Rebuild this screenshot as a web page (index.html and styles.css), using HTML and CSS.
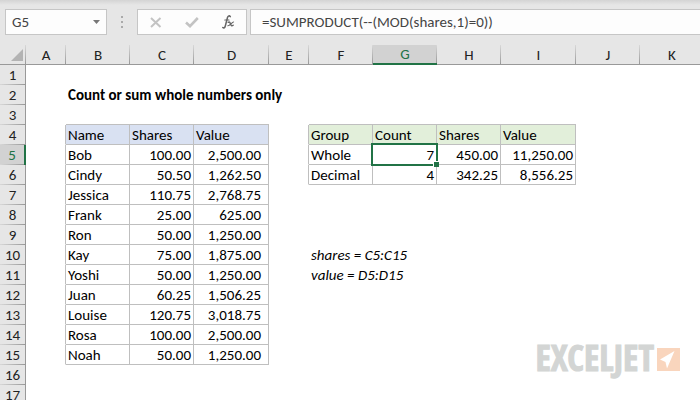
FILE: index.html
```html
<!DOCTYPE html>
<html lang="en">
<head>
<meta charset="UTF-8" />
<meta name="viewport" content="width=device-width, initial-scale=1" />
<title>Count or sum whole numbers only</title>
<link rel="stylesheet" href="styles.css">
</head>
<body>

<!-- Formula bar -->
<div class="formula-bar">
  <div class="name-box">
    <input type="text" class="name-input" value="G5" aria-label="Name box">
    <button class="name-arrow" aria-label="Show names">
      <svg width="7" height="4" viewBox="0 0 7 4"><path d="M0 0h7L3.500 4z" fill="#777"/></svg>
    </button>
  </div>
  <div class="grip"><i></i><i></i><i></i></div>
  <div class="formula-buttons">
    <button aria-label="Cancel">
      <svg width="12" height="11" viewBox="0 0 12 11"><path d="M1 1L10.500 10M10.500 1L1 10" fill="none" stroke="#c3c3c3" stroke-width="2"/></svg>
    </button>
    <button aria-label="Enter">
      <svg width="14" height="11" viewBox="0 0 14 11"><path d="M1 5.500L5 9.200L12.800 1" fill="none" stroke="#c3c3c3" stroke-width="2.600"/></svg>
    </button>
    <button aria-label="Insert function">
      <svg width="13" height="14" viewBox="0 0 13 14" fill="none" stroke="#666" stroke-linecap="round">
        <path d="M8.300 1.600C7.500 .4 6 .7 5.500 2.500L3.300 11C2.900 12.800 1.700 13.300 .8 12.500" stroke-width="1.500"/>
        <path d="M2.800 5h4.200" stroke-width="1.200"/>
        <path d="M6.200 7.300C7.600 6.400 8 7.500 8.500 9C9 10.700 9.700 11.300 11.200 10.200" stroke-width="1.400"/>
        <path d="M11.600 7C10.200 6.800 7.700 11.200 5.800 10.800" stroke-width="1.100"/>
      </svg>
    </button>
  </div>
  <input type="text" class="formula-input" value="=SUMPRODUCT(--(MOD(shares,1)=0))" aria-label="Formula">
</div>

<!-- Worksheet -->
<table class="sheet">
  <colgroup>
    <col class="c-num"><col class="c-small"><col class="c-mid"><col class="c-mid"><col class="c-wide"><col class="c-small">
    <col class="c-mid"><col class="c-mid"><col class="c-mid"><col class="c-wide"><col class="c-mid"><col class="c-mid"><col>
  </colgroup>
  <thead>
    <tr>
      <th class="corner"><svg width="12" height="12" viewBox="0 0 12 12"><path d="M12 0v12H0z" fill="#b3b3b3"/></svg></th>
      <th>A</th><th>B</th><th>C</th><th>D</th><th>E</th><th>F</th><th class="active">G</th><th>H</th><th>I</th><th>J</th><th>K</th><th></th>
    </tr>
  </thead>
  <tbody>
    <tr><th>1</th><td colspan="12"></td></tr>
    <tr><th>2</th><td></td><td class="title" colspan="11">Count or sum whole numbers only</td></tr>
    <tr class="edge"><th>3</th><td></td><td class="box"></td><td class="box"></td><td class="box"></td><td></td><td class="box"></td><td class="box"></td><td class="box"></td><td class="box"></td><td colspan="3"></td></tr>
    <tr>
      <th>4</th><td class="left-edge"></td>
      <td class="box blue">Name</td><td class="box blue">Shares</td><td class="box blue">Value</td><td class="left-edge"></td>
      <td class="box green">Group</td><td class="box green">Count</td><td class="box green">Shares</td><td class="box green">Value</td><td colspan="3"></td>
    </tr>
    <tr>
      <th class="active">5</th><td class="left-edge"></td>
      <td class="box">Bob</td><td class="box num">100.00</td><td class="box num acct">2,500.00</td><td class="left-edge"></td>
      <td class="box">Whole</td><td class="box num selected">7</td><td class="box num">450.00</td><td class="box num">11,250.00</td><td colspan="3"></td>
    </tr>
    <tr>
      <th>6</th><td class="left-edge"></td>
      <td class="box">Cindy</td><td class="box num">50.50</td><td class="box num acct">1,262.50</td><td class="left-edge"></td>
      <td class="box">Decimal</td><td class="box num">4</td><td class="box num">342.25</td><td class="box num">8,556.25</td><td colspan="3"></td>
    </tr>
    <tr><th>7</th><td class="left-edge"></td><td class="box">Jessica</td><td class="box num">110.75</td><td class="box num acct">2,768.75</td><td colspan="8"></td></tr>
    <tr><th>8</th><td class="left-edge"></td><td class="box">Frank</td><td class="box num">25.00</td><td class="box num acct">625.00</td><td colspan="8"></td></tr>
    <tr><th>9</th><td class="left-edge"></td><td class="box">Ron</td><td class="box num">50.00</td><td class="box num acct">1,250.00</td><td colspan="8"></td></tr>
    <tr><th>10</th><td class="left-edge"></td><td class="box">Kay</td><td class="box num">75.00</td><td class="box num acct">1,875.00</td><td></td><td class="note" colspan="7">shares = C5:C15</td></tr>
    <tr><th>11</th><td class="left-edge"></td><td class="box">Yoshi</td><td class="box num">50.00</td><td class="box num acct">1,250.00</td><td></td><td class="note" colspan="7">value = D5:D15</td></tr>
    <tr><th>12</th><td class="left-edge"></td><td class="box">Juan</td><td class="box num">60.25</td><td class="box num acct">1,506.25</td><td colspan="8"></td></tr>
    <tr><th>13</th><td class="left-edge"></td><td class="box">Louise</td><td class="box num">120.75</td><td class="box num acct">3,018.75</td><td colspan="8"></td></tr>
    <tr><th>14</th><td class="left-edge"></td><td class="box">Rosa</td><td class="box num">100.00</td><td class="box num acct">2,500.00</td><td colspan="8"></td></tr>
    <tr><th>15</th><td class="left-edge"></td><td class="box">Noah</td><td class="box num">50.00</td><td class="box num acct">1,250.00</td><td colspan="8"></td></tr>
    <tr><th>16</th><td colspan="12"></td></tr>
    <tr><th>17</th><td colspan="12"></td></tr>
  </tbody>
</table>

<!-- Watermark -->
<div class="logo">
  <span>EXCELJET</span>
  <svg width="23" height="23" viewBox="0 0 23 23"><path d="M0 0h23v23H0z" fill="#f9d5bd"/><path d="M17.500 3L3 11.500L8.500 14L10 20.500z" fill="#fff"/></svg>
</div>

</body>
</html>
```
FILE: styles.css
```css
* {
  box-sizing: border-box;
}
body {
  margin: 0;
  height: 100vh;
  overflow: hidden;
  background: white;
  color: black;
  font-family: Carlito, Lato, sans-serif;
  font-size: 15px;
}
button, input {
  border: none;
  padding: 0;
  margin: 0;
  background: none;
  font: inherit;
  color: #444;
}
button {
  display: flex;
  align-items: center;
  justify-content: center;
  cursor: pointer;
}

/* Formula bar */
.formula-bar {
  display: flex;
  height: 45px;
  padding: 9px 0 10px 5px;
  background: linear-gradient(#d4d4d4, #e6e6e6 5px);
}
.name-box, .formula-buttons, .formula-input {
  background: #fdfdfd;
  border: 1px solid #c6c6c6;
}
.name-box {
  display: flex;
  width: 102px;
}
.name-input {
  flex: 1;
  min-width: 0;
  padding-left: 6px;
}
.name-arrow {
  width: 20px;
}
.grip {
  display: flex;
  flex-direction: column;
  align-items: center;
  justify-content: center;
  gap: 3px;
  width: 30px;
}
.grip i {
  width: 2px;
  height: 2px;
  background: #aaa;
}
.formula-buttons {
  display: flex;
  width: 110px;
  margin-right: 3px;
}
.formula-buttons button {
  flex: 1;
}
.formula-input {
  flex: 1;
  min-width: 0;
  padding-left: 11px;
  border-right: none;
}

/* Worksheet */
.sheet {
  width: 100%;
  table-layout: fixed;
  border-collapse: separate;
  border-spacing: 0;
  line-height: 18px;
}
.c-num { width: 26px; }
.c-small { width: 40px; }
.c-mid { width: 64px; }
.c-wide { width: 75px; }

.sheet th, .sheet td {
  height: 20px;
  padding: 0 2px;
  white-space: nowrap;
  border: 0 solid #bfbfbf;
}
.sheet td {
  text-align: left;
  border-bottom: 1px solid transparent;
}
.sheet th {
  padding: 0;
  font-weight: normal;
  text-align: center;
  color: #222;
  background: #e6e6e6;
}
.sheet thead th {
  border-bottom: 1px solid #999;
  background: linear-gradient(#d8d8d8, #999) right / 1px 100% no-repeat #e6e6e6;
}
.sheet tbody th {
  border-right: 1px solid #999;
  background: linear-gradient(90deg, #d8d8d8, #999) bottom / 100% 1px no-repeat #e6e6e6;
}
.sheet thead .corner {
  padding: 0 3px 3px 0;
  text-align: right;
  vertical-align: bottom;
  line-height: 0;
}
.sheet thead .active {
  color: #217346;
  background-color: #d2d2d2;
  border-bottom: 2px solid #217346;
}
.sheet tbody .active {
  color: #217346;
  background-color: #d2d2d2;
  border-right: 2px solid #217346;
}

.sheet .box {
  border-right: 1px solid #bfbfbf;
  border-bottom: 1px solid #bfbfbf;
}
.sheet .edge .box {
  border-right: none;
}
.sheet .left-edge {
  border-right: 1px solid #bfbfbf;
}
.blue { background: #d9e1f2; }
.green { background: #e2efda; }
.sheet .num { text-align: right; }
.sheet .acct { padding-right: 7px; }
.title { font-weight: bold; }
.note { font-style: italic; }

/* Selected cell frame and its fill handle */
.selected {
  position: relative;
}
.selected::before {
  content: "";
  position: absolute;
  inset: -2px;
  border: 2px solid #217346;
}
.selected::after {
  content: "";
  position: absolute;
  right: -3px;
  bottom: -3px;
  width: 5px;
  height: 5px;
  box-sizing: content-box;
  background: #217346;
  border: 1px solid white;
  border-right: none;
  border-bottom: none;
}

/* Watermark */
.logo {
  position: absolute;
  right: 20px;
  bottom: 26px;
  display: flex;
  align-items: baseline;
  gap: 3px;
  color: #d3d5d4;
  font: 800 36px/32px "Open Sans Condensed", "Liberation Sans Narrow", Lato, sans-serif;
  -webkit-text-stroke: 1px #d3d5d4;
}
```
